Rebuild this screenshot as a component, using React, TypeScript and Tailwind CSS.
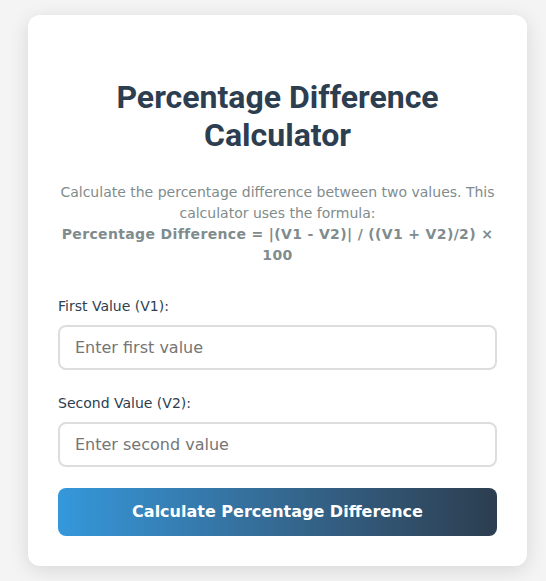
import React from 'react';

export default function App() {
  return (
    <div className="min-h-[581px] bg-[#f4f4f4] pt-[15px] pb-[14px]">
      {/* Card */}
      <div className="ml-[28px] w-[499px] rounded-[12px] bg-white px-[30px] pt-[33px] pb-[30px] shadow-[0_4px_20px_rgba(0,0,0,0.12)]">
        <h1 className="mt-[30px] text-center font-['Roboto',sans-serif] text-[32px] leading-[38px] font-bold text-[#2c3e50]">
          Percentage Difference Calculator
        </h1>

        <p className="mt-[28px] text-center font-['DejaVu_Sans',Verdana,sans-serif] text-[14px] leading-[21px] text-[#7f8c8d]">
          Calculate the percentage difference between two values. This calculator uses the formula:
          <br />
          <strong className="tracking-[0.35px]">Percentage Difference = |(V1 - V2)| / ((V1 + V2)/2) × 100</strong>
        </p>

        <div className="mt-[30px] font-['DejaVu_Sans',Verdana,sans-serif]">
          <div className="mb-[23px]">
            <label className="block text-[14px] leading-[21px] text-[#2c3e50]">First Value (V1):</label>
            <input
              type="number"
              placeholder="Enter first value"
              className="mt-[8px] block h-[45px] w-full rounded-[8px] border-2 border-[#dddddd] px-[15px] text-[16px] text-[#2c3e50] placeholder:text-[#757575] outline-none"
            />
          </div>

          <div className="mb-[21px]">
            <label className="block text-[14px] leading-[21px] text-[#2c3e50]">Second Value (V2):</label>
            <input
              type="number"
              placeholder="Enter second value"
              className="mt-[8px] block h-[45px] w-full rounded-[8px] border-2 border-[#dddddd] px-[15px] text-[16px] text-[#2c3e50] placeholder:text-[#757575] outline-none"
            />
          </div>

          <button className="block h-[48px] w-full rounded-[8px] bg-gradient-to-r from-[#3498db] to-[#2c3e50] text-[16px] font-bold text-white">
            Calculate Percentage Difference
          </button>
        </div>
      </div>
    </div>
  );
}
